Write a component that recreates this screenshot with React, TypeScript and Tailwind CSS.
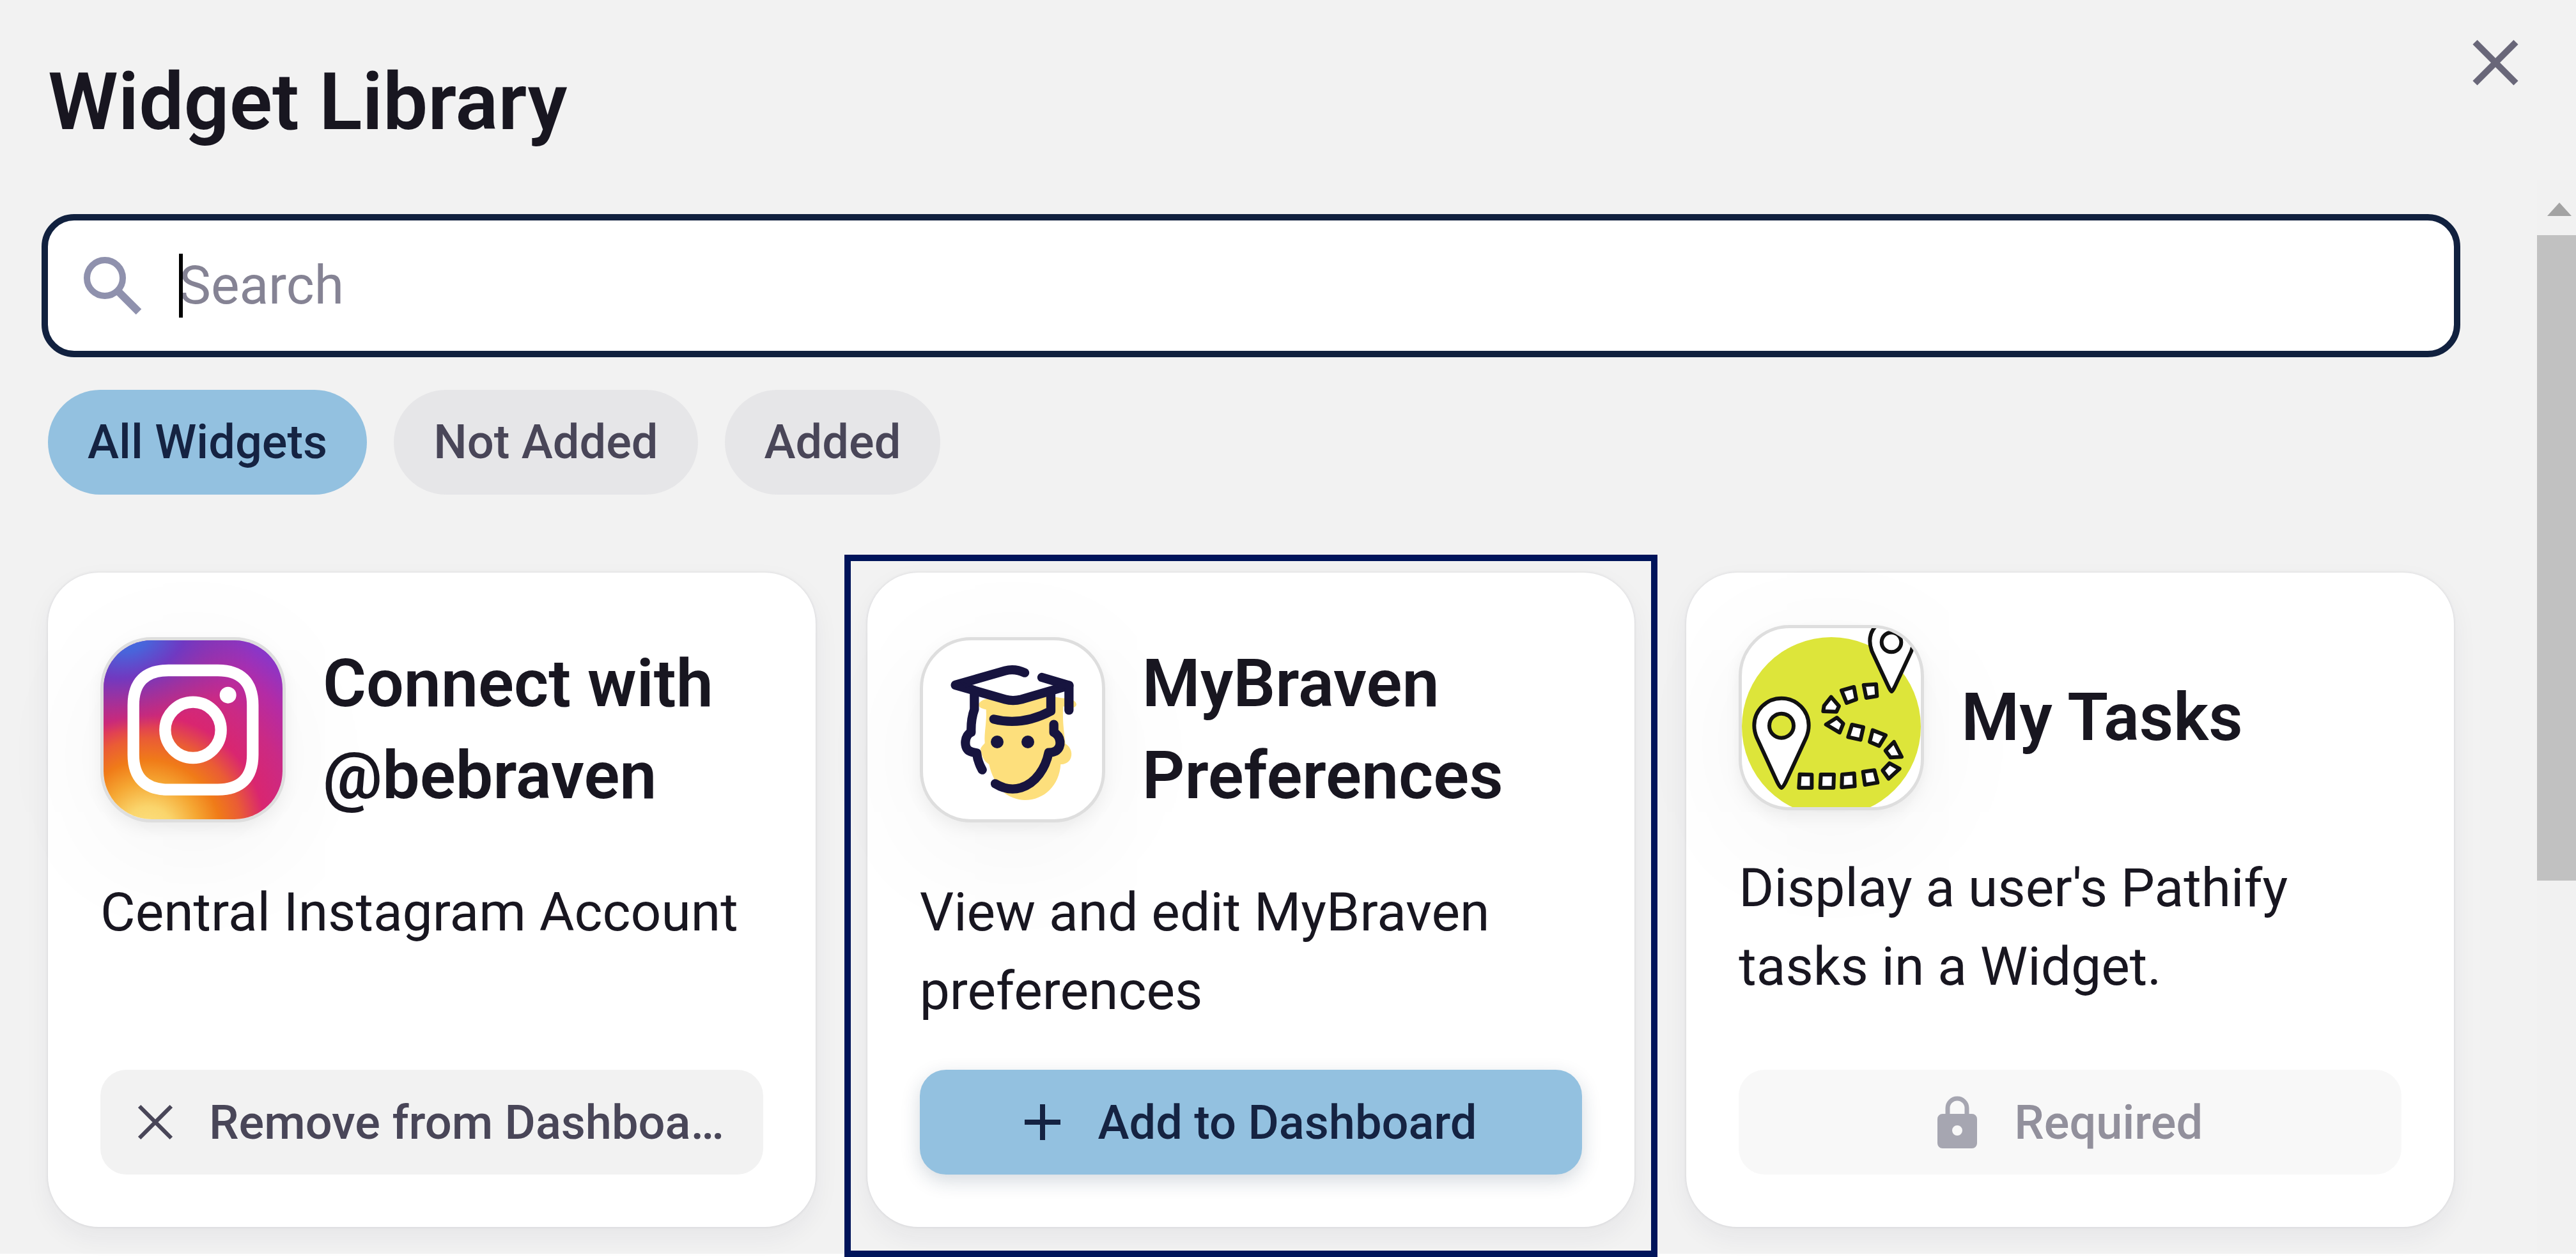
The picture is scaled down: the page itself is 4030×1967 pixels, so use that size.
import { useState } from "react";
import type { ReactNode } from "react";

const filters = ["All Widgets", "Not Added", "Added"];

function CloseIcon({ className, weight }: { className: string; weight: number }) {
  return (
    <svg className={className} viewBox="0 0 72 72" fill="none" stroke="currentColor" strokeWidth={weight} aria-hidden="true">
      <path d="M4 4L68 68M68 4L4 68" />
    </svg>
  );
}

function SearchIcon() {
  return (
    <svg className="size-[92px] shrink-0 text-[#8f91ad]" viewBox="0 0 92 92" fill="none" stroke="currentColor" strokeWidth="10" aria-hidden="true">
      <circle cx="34" cy="34" r="28" />
      <path d="M54 54L87 87" strokeWidth="12" />
    </svg>
  );
}

function PlusIcon() {
  return (
    <svg className="size-[56px] shrink-0" viewBox="0 0 56 56" fill="none" stroke="currentColor" strokeWidth="8" aria-hidden="true">
      <path d="M28 0V56M0 28H56" />
    </svg>
  );
}

function LockIcon() {
  return (
    <svg className="h-[82px] w-[62px] shrink-0 text-[#a6a6b1]" viewBox="0 0 62 82" aria-hidden="true">
      <path d="M16 32V19a15 15 0 0 1 30 0v13" fill="none" stroke="currentColor" strokeWidth="7" />
      <path
        fill="currentColor"
        fillRule="evenodd"
        d="M8 28h46a8 8 0 0 1 8 8v38a8 8 0 0 1-8 8H8a8 8 0 0 1-8-8V36a8 8 0 0 1 8-8zM31 46a8 8 0 1 0 0 16a8 8 0 1 0 0-16z"
      />
    </svg>
  );
}

function InstagramLogo() {
  return (
    <svg className="size-full" viewBox="91 128 840 840" aria-hidden="true">
      <defs>
        <radialGradient id="ig-warm" gradientUnits="userSpaceOnUse" cx="300" cy="1030" r="1000">
          <stop offset="0" stopColor="#fde284" />
          <stop offset="0.12" stopColor="#fad56c" />
          <stop offset="0.24" stopColor="#f5a632" />
          <stop offset="0.34" stopColor="#f07b18" />
          <stop offset="0.44" stopColor="#ea5c35" />
          <stop offset="0.55" stopColor="#d92670" />
          <stop offset="0.7" stopColor="#ca2a85" />
          <stop offset="0.85" stopColor="#b42ba5" />
          <stop offset="1" stopColor="#8a36c8" />
        </radialGradient>
        <radialGradient
          id="ig-cool"
          gradientUnits="userSpaceOnUse"
          cx="0"
          cy="0"
          r="1"
          gradientTransform="translate(210 120) rotate(-14) scale(640 430)"
        >
          <stop offset="0" stopColor="#3f6ee0" />
          <stop offset="0.15" stopColor="#4a63da" />
          <stop offset="0.42" stopColor="#6a3ac4" stopOpacity="0.92" />
          <stop offset="1" stopColor="#8f35a0" stopOpacity="0" />
        </radialGradient>
      </defs>
      <rect x="91" y="128" width="840" height="840" fill="url(#ig-warm)" />
      <rect x="91" y="128" width="840" height="840" fill="url(#ig-cool)" />
      <g fill="none" stroke="#fff" strokeWidth="55">
        <path d="M395 269H627C735 269 791 325 791 433V665C791 773 735 829 627 829H395C287 829 231 773 231 665V433C231 325 287 269 395 269Z" />
        <circle cx="511" cy="549" r="131" />
      </g>
      <circle cx="675" cy="385" r="39" fill="#fff" />
    </svg>
  );
}

function GraduateLogo() {
  return (
    <svg className="size-full" viewBox="130 130 840 840" aria-hidden="true">
      <path
        fill="#fddf7c"
        d="M392 430C400 405 440 400 520 390C570 355 640 355 680 385L790 402C810 400 850 410 850 432C845 450 820 450 788 440C784 500 790 545 798 615C825 630 835 665 820 690C810 705 795 712 776 712C770 810 700 880 608 880C570 880 530 862 510 845C470 800 450 760 440 712C420 700 405 680 400 640C405 625 415 620 420 612C416 560 430 520 426 455C405 450 390 445 392 430Z"
      />
      <path
        fill="#fff"
        d="M325 340L520 274C545 268 580 272 610 282L690 302L760 340L560 405L530 405Z"
      />
      <g fill="none" stroke="#17143f" strokeWidth="43" strokeLinecap="round" strokeLinejoin="round">
        <path d="M607 282C572 266 540 266 515 273L282 340L515 407C540 414 565 414 592 407L815 342L688 304" />
        <path d="M815 342V458" />
        <path d="M371 372V455C358 490 355 530 356 562C325 575 320 630 345 648C358 656 366 657 382 659C385 690 395 715 408 738" />
        <path d="M462 500C550 522 640 510 730 462V372" />
        <path d="M744 525V562C778 580 785 630 752 650C742 655 733 657 720 657C705 730 660 800 590 822C545 835 505 825 469 803" />
      </g>
      <path d="M300 325L380 345L330 350ZM800 325L735 345L800 358Z" fill="#17143f" />
      <circle cx="478" cy="607" r="30" fill="#17143f" />
      <circle cx="622" cy="607" r="30" fill="#17143f" />
    </svg>
  );
}

function PathLogo() {
  return (
    <svg className="size-full" viewBox="130 128 840 840" aria-hidden="true">
      <circle cx="550" cy="590" r="420" fill="#dde53a" />
      <g fill="#fff" stroke="#111" strokeWidth="18" strokeLinejoin="round">
        <path
          fillRule="evenodd"
          d="M316 878C306 872 302 862 296 850L200 642C191 620 188 605 188 585A128 128 0 0 1 444 585C444 605 441 620 432 642L336 850C330 862 326 872 316 878ZM316 529A57 57 0 1 0 316 643A57 57 0 1 0 316 529Z"
        />
        <path d="M833 425C826 420 822 410 816 398L742 240C734 220 731 208 731 188A102 102 0 0 1 935 188C935 208 932 220 924 240L850 398C844 410 840 420 833 425Z" />
        <circle cx="832" cy="194" r="46" />
        <path d="M702 395L760 391L764 447L714 455Z" />
        <path d="M598 420L656 404L667 462L622 479Z" />
        <path d="M549 451L586 494L574 520L512 518L516 492Z" />
        <path d="M576 548L606 576L589 618L525 580Z" />
        <path d="M647 581L700 593L687 652L629 639Z" />
        <path d="M744 607L805 631L774 681L730 662Z" />
        <path d="M844 662L880 732L828 735L804 703Z" />
        <path d="M823 762L870 788L819 835L791 796Z" />
        <path d="M699 802L752 795L767 853L708 863Z" />
        <path d="M601 815L657 810L660 870L599 875Z" />
        <path d="M501 815H562L560 877H498Z" />
        <path d="M402 814L458 816V877H398Z" />
      </g>
    </svg>
  );
}

interface WidgetCardProps {
  title: string;
  description: string;
  logo: ReactNode;
  highlighted?: boolean;
  children: ReactNode;
}

function WidgetCard({ title, description, logo, highlighted = false, children }: WidgetCardProps) {
  return (
    <article className="relative flex min-w-0 flex-col rounded-[80px] bg-white p-[82px] shadow-[0_0_4px_rgba(30,30,60,0.12),0_16px_40px_rgba(30,30,60,0.06)]">
      <div className="flex items-center gap-[58px]">
        <div className="size-[290px] shrink-0 overflow-hidden rounded-[80px] border-[5px] border-[#dedede] bg-white shadow-[0_10px_24px_rgba(0,0,0,0.06),0_40px_200px_rgba(0,0,0,0.05)]">
          {logo}
        </div>
        <h2 className="py-5 text-[104px] leading-[144px] font-semibold">{title}</h2>
      </div>
      <p className="mt-[60px] mb-[62px] text-[84px] leading-[123px]">{description}</p>
      <div className="mt-auto flex">{children}</div>
      {highlighted && (
        <div className="pointer-events-none absolute -inset-x-9 -top-7 -bottom-[47px] border-[10px] border-[#00145a]" />
      )}
    </article>
  );
}

export default function App() {
  const [filter, setFilter] = useState("All Widgets");

  return (
    <div className="bg-white pb-[5px] font-['Roboto',sans-serif] text-[#181620]">
      <div className="bg-[#f2f2f2]">
        <header className="flex items-start justify-between pt-[62px] pr-[90px] pl-[75px]">
          <h1 className="pt-[26px] text-[125px] leading-[144px] font-semibold">Widget Library</h1>
          <button type="button" aria-label="Close" className="text-[#696779]">
            <CloseIcon className="size-[72px]" weight={10} />
          </button>
        </header>

        <div className="flex pt-[50px]">
          <main className="min-w-0 flex-1 pt-[53px] pr-[120px] pb-[42px] pl-[65px]">
            <label className="flex h-[224px] items-center gap-[58px] rounded-[51px] border-[10px] border-[#11213f] bg-white px-[55px]">
              <SearchIcon />
              <span className="relative flex flex-1">
                <input
                  type="text"
                  aria-label="Search"
                  placeholder="Search"
                  className="w-full text-[84px] leading-[100px] outline-none placeholder:text-[#858394]"
                />
                <span className="absolute inset-y-0 left-0 w-[6px] bg-black" />
              </span>
            </label>

            <div className="mt-[51px] flex gap-[42px] px-[10px]">
              {filters.map((name) => (
                <button
                  key={name}
                  type="button"
                  aria-pressed={name === filter}
                  onClick={() => setFilter(name)}
                  className={`h-[164px] rounded-full px-[62px] text-[74px] leading-[100px] font-medium ${
                    name === filter ? "bg-[#93c1e0] text-[#152342]" : "bg-[#e6e6e8] text-[#494658]"
                  }`}
                >
                  {name}
                </button>
              ))}
            </div>

            <div className="mt-[122px] grid grid-cols-3 gap-[81px] px-[10px]">
              <WidgetCard title="Connect with @bebraven" description="Central Instagram Account" logo={<InstagramLogo />}>
                <button
                  type="button"
                  className="flex h-[164px] w-full items-center gap-[56px] rounded-[41px] bg-[#f2f2f2] px-[58px] text-[74px] font-medium text-[#494658]"
                >
                  <CloseIcon className="size-[56px] shrink-0" weight={8} />
                  <span className="truncate">Remove from Dashboard</span>
                </button>
              </WidgetCard>

              <WidgetCard
                title="MyBraven Preferences"
                description="View and edit MyBraven preferences"
                logo={<GraduateLogo />}
                highlighted
              >
                <button
                  type="button"
                  className="flex h-[164px] w-full items-center justify-center gap-[58px] rounded-[41px] bg-[#93c1e0] px-[58px] text-[74px] font-medium text-[#152342] shadow-[0_10px_30px_rgba(20,50,80,0.18)]"
                >
                  <PlusIcon />
                  <span className="truncate">Add to Dashboard</span>
                </button>
              </WidgetCard>

              <WidgetCard title="My Tasks" description="Display a user's Pathify tasks in a Widget." logo={<PathLogo />}>
                <button
                  type="button"
                  disabled
                  className="flex h-[164px] w-full items-center justify-center gap-[58px] rounded-[41px] bg-[#f8f8f8] px-[58px] text-[74px] font-medium text-[#92909c]"
                >
                  <LockIcon />
                  <span className="truncate">Required</span>
                </button>
              </WidgetCard>
            </div>
          </main>

          <div className="flex w-[61px] flex-col bg-[#f1f1f1] pt-[35px]" aria-hidden="true">
            <svg className="ml-4 h-[21px] w-[38px]" viewBox="0 0 38 21">
              <path d="M19 0L38 21H0Z" fill="#a3a3a3" />
            </svg>
            <div className="mt-[30px] h-[1010px] w-full bg-[#c1c1c1]" />
          </div>
        </div>
      </div>
    </div>
  );
}
